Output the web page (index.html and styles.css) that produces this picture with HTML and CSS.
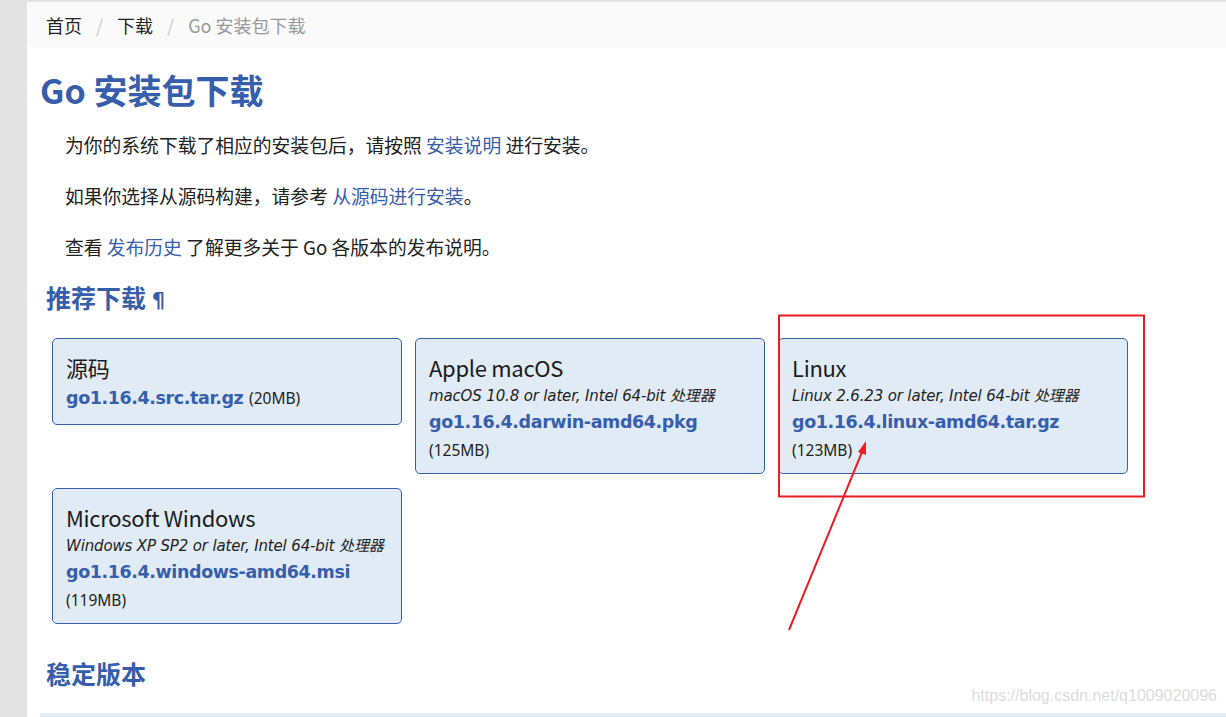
FILE: index.html
```html
<!DOCTYPE html>
<html lang="zh-CN">
<head>
<meta charset="utf-8">
<title>Go 安装包下载</title>
<link rel="stylesheet" href="styles.css">
</head>
<body>
<div class="side"></div>
<div class="main">
  <nav class="crumbs">
    <a class="crumb" href="#">首页</a><span class="sep">/</span><a class="crumb" href="#">下载</a><span class="sep">/</span><span class="current">Go 安装包下载</span>
  </nav>
  <div class="content">
    <h1 class="title">Go 安装包下载</h1>
    <p class="intro first">为你的系统下载了相应的安装包后，请按照 <a href="#">安装说明</a> 进行安装。</p>
    <p class="intro">如果你选择从源码构建，请参考 <a href="#">从源码进行安装</a>。</p>
    <p class="intro">查看 <a href="#">发布历史</a> 了解更多关于 Go 各版本的发布说明。</p>
    <h2 class="section">推荐下载 <span class="pilcrow">¶</span></h2>
    <div class="downloads">
      <a class="dl dl-src" href="#">
        <div class="platform">源码</div>
        <div class="filename">go1.16.4.src.tar.gz <span class="size">(20MB)</span></div>
      </a>
      <a class="dl" href="#">
        <div class="platform">Apple macOS</div>
        <div class="reqs">macOS 10.8 or later, Intel 64-bit 处理器</div>
        <div class="filename">go1.16.4.darwin-amd64.pkg</div>
        <div class="size">(125MB)</div>
      </a>
      <a class="dl" href="#">
        <div class="platform">Linux</div>
        <div class="reqs">Linux 2.6.23 or later, Intel 64-bit 处理器</div>
        <div class="filename">go1.16.4.linux-amd64.tar.gz</div>
        <div class="size">(123MB)</div>
      </a>
      <a class="dl" href="#">
        <div class="platform">Microsoft Windows</div>
        <div class="reqs">Windows XP SP2 or later, Intel 64-bit 处理器</div>
        <div class="filename">go1.16.4.windows-amd64.msi</div>
        <div class="size">(119MB)</div>
      </a>
    </div>
    <h2 class="section stable">稳定版本</h2>
    <div class="tablebar"></div>
  </div>
</div>
<svg class="annot" width="1226" height="717" viewBox="0 0 1226 717">
  <rect x="779" y="315.5" width="365" height="181" fill="none" stroke="#ec1c24" stroke-width="2"/>
  <line x1="789" y1="630" x2="862" y2="452" stroke="#ec1c24" stroke-width="2"/>
  <polygon points="866,441 858,452 866,455" fill="#ec1c24"/>
</svg>
<div class="watermark">https://blog.csdn.net/q1009020096</div>
</body>
</html>
```

FILE: styles.css
```css
html, body {
  margin: 0;
  padding: 0;
  height: 100%;
  overflow: hidden;
}
body {
  display: flex;
  background: #e3e3e3;
  font-family: "Noto Sans", "Noto Sans CJK SC", sans-serif;
  color: #222;
}
.side {
  width: 27px;
  flex: none;
}
.main {
  flex: 1;
  margin-top: 2px;
  background: #fff;
  display: flex;
  flex-direction: column;
}
.crumbs {
  flex: none;
  height: 45px;
  background: #fafafa;
  display: flex;
  align-items: center;
  padding-left: 19px;
  font-size: 18px;
  font-family: "Noto Sans CJK SC", sans-serif;
}
.crumb {
  color: #222;
  text-decoration: none;
}
.sep {
  color: #c8c8c8;
  margin: 0 14px;
}
.current {
  color: #999;
}
.content {
  flex: none;
  padding-left: 13px;
}
.title {
  margin: 20px 0 0 0;
  font-size: 34px;
  line-height: 46px;
  font-weight: bold;
  color: #375eab;
  font-family: "Noto Sans CJK SC", sans-serif;
}
.intro {
  margin: 0 0 0 25px;
  font-size: 18.8px;
  line-height: 51px;
  font-family: "Noto Sans CJK SC", sans-serif;
  color: #222;
}
.intro.first {
  margin-top: 6px;
}
.intro a {
  color: #375eab;
  text-decoration: none;
}
.section {
  margin: 5px 0 0 6px;
  font-size: 25px;
  line-height: 40px;
  color: #375eab;
  font-weight: bold;
  font-family: "Noto Sans CJK SC", sans-serif;
}
.pilcrow {
  font-family: "DejaVu Sans", sans-serif;
  font-weight: bold;
  font-size: 21px;
}
.downloads {
  display: grid;
  grid-template-columns: repeat(3, 350px);
  column-gap: 13px;
  row-gap: 14px;
  align-items: start;
  margin: 17px 0 0 12px;
}
.dl {
  display: block;
  box-sizing: border-box;
  width: 350px;
  border: 1px solid #375eab;
  border-radius: 5px;
  background: #e0ebf5;
  padding: 15px 13px 9px 13px;
  color: #222;
  text-decoration: none;
}
.dl-src {
  padding-bottom: 12px;
}
.dl-src .filename {
  margin-top: 1px;
}
.platform {
  font-size: 22px;
  line-height: 27px;
  margin-bottom: 3px;
  font-family: "Noto Sans CJK SC", sans-serif;
  letter-spacing: -0.3px;
  color: #1a1a1a;
}
.reqs {
  font-size: 15px;
  line-height: 25px;
  font-style: italic;
  font-family: "DejaVu Sans", "Noto Sans CJK SC", sans-serif;
  letter-spacing: -0.15px;
}
.filename {
  font-size: 17.5px;
  line-height: 27px;
  font-weight: bold;
  color: #375eab;
  font-family: "DejaVu Sans", "Noto Sans CJK SC", sans-serif;
  letter-spacing: -0.4px;
}
.filename .size {
  color: #222;
  font-weight: normal;
  display: inline;
}
.size {
  font-size: 15.5px;
  line-height: 28px;
  font-family: "Noto Sans", "Noto Sans CJK SC", sans-serif;
  font-weight: normal;
  letter-spacing: 0;
}
.stable {
  margin-top: 29px;
}
.tablebar {
  margin-top: 20px;
  height: 10px;
  background: #e0ebf5;
}
.annot {
  position: absolute;
  left: 0;
  top: 0;
  pointer-events: none;
}
.watermark {
  position: absolute;
  right: 9px;
  top: 687px;
  font-family: "Liberation Sans", sans-serif;
  font-size: 16px;
  color: #dcdcdc;
}
```
